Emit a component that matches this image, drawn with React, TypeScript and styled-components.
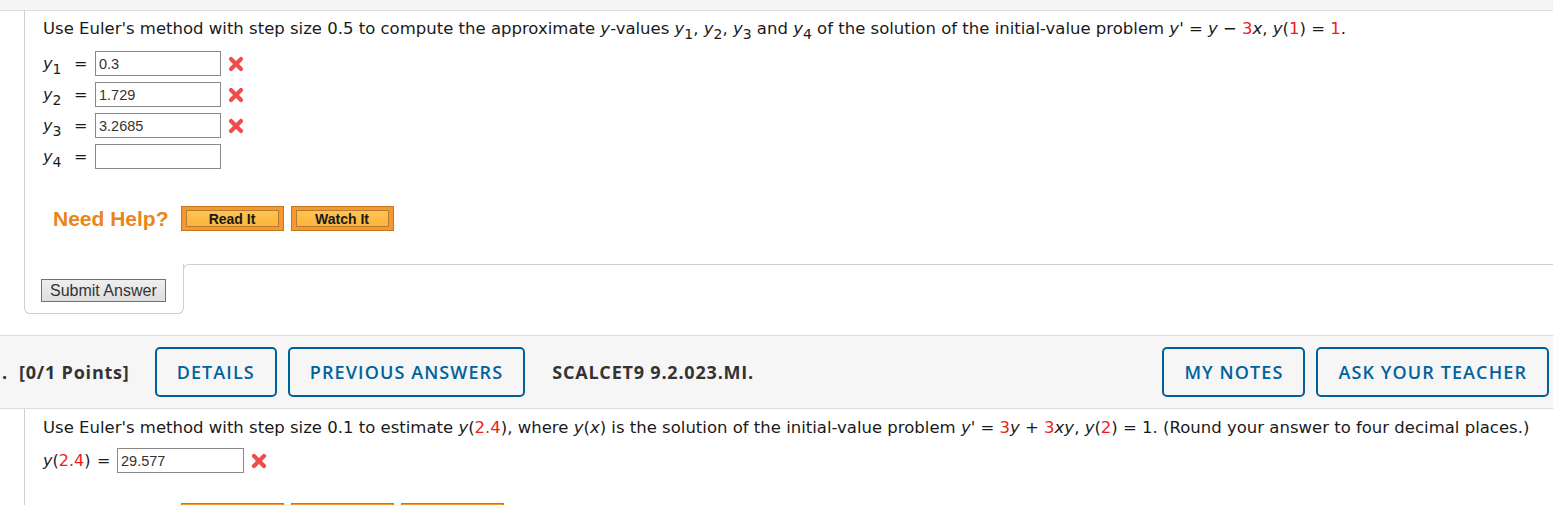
import React from "react";
import styled, { createGlobalStyle } from "styled-components";

const GlobalStyle = createGlobalStyle`
  html, body {
    margin: 0;
    padding: 0;
    background: #ffffff;
  }
  body {
    font-family: "DejaVu Sans", Verdana, sans-serif;
    color: #1a1a1a;
    overflow: hidden;
  }
`;

const TopBand = styled.div`
  height: 10px;
  background: #f5f5f5;
  border-bottom: 1px solid #dcdcdc;
`;

const Question = styled.section`
  margin-left: 24px;
`;

const QuestionBody = styled.div<{ $top: number; $bottom: number }>`
  border-left: 1px solid #cfcfcf;
  padding: ${({ $top }) => $top}px 0 ${({ $bottom }) => $bottom}px 18px;
`;

const Prompt = styled.p`
  margin: 0;
  font-size: 16.5px;
  line-height: 20px;
  color: #1a1a1a;
  white-space: nowrap;
`;

const Var = styled.i`
  font-style: italic;
`;

const Red = styled.span`
  color: #ee1c1c;
`;

const Sub = styled.sub`
  font-size: 14px;
  line-height: 0;
  vertical-align: -5px;
`;

const AnswerList = styled.div<{ $top: number }>`
  display: flex;
  flex-direction: column;
  gap: 6px;
  margin-top: ${({ $top }) => $top}px;
`;

const AnswerRow = styled.div`
  display: flex;
  align-items: center;
  height: 25px;
`;

const Label = styled.span<{ $width: number }>`
  display: inline-flex;
  align-items: center;
  flex: none;
  width: ${({ $width }) => $width}px;
  font-size: 16px;
  white-space: nowrap;
`;

const Name = styled.span<{ $width?: number }>`
  display: inline-block;
  flex: none;
  width: ${({ $width }) => ($width ? `${$width}px` : "auto")};
`;

const Equals = styled.span`
  flex: none;
`;

const AnswerInput = styled.input<{ $width: number }>`
  box-sizing: border-box;
  width: ${({ $width }) => $width}px;
  height: 25px;
  margin: 0;
  padding: 0 3px;
  border: 1px solid #8a8a8a;
  border-radius: 0;
  font-family: "Liberation Sans", Arial, sans-serif;
  font-size: 14.5px;
  color: #333333;
  background: #ffffff;
  outline: none;
`;

const Mark = styled.svg`
  width: 16px;
  height: 16px;
  margin-left: 7px;
  flex: none;
`;

const WrongMark = () => (
  <Mark viewBox="0 0 16 16">
    <path
      d="M3 3 L13 13 M13 3 L3 13"
      stroke="#f04c4c"
      strokeWidth="4.2"
      strokeLinecap="round"
    />
  </Mark>
);

const HelpRow = styled.div<{ $top: number }>`
  display: flex;
  align-items: center;
  margin-top: ${({ $top }) => $top}px;
  padding-left: 10px;
`;

const HelpLabel = styled.span`
  font-family: "Liberation Sans", Arial, sans-serif;
  font-weight: 700;
  font-size: 21px;
  color: #ec841c;
  margin-right: 12px;
`;

const HelpButtons = styled.div`
  display: flex;
  gap: 7px;
`;

const HelpButton = styled.button`
  box-sizing: border-box;
  width: 103px;
  height: 25px;
  padding: 3px 4px;
  border: 1px solid #c8741e;
  background: #f6992c;
  cursor: pointer;
  display: flex;
`;

const HelpButtonFace = styled.span`
  flex: 1;
  display: flex;
  align-items: center;
  justify-content: center;
  border: 1px solid #b77a33;
  background: linear-gradient(#ffc452, #fbb43b);
  font-family: "Liberation Sans", Arial, sans-serif;
  font-weight: 700;
  font-size: 14px;
  color: #1a1a1a;
`;

const Footer = styled.div`
  display: flex;
  align-items: flex-start;
`;

const SubmitTab = styled.div`
  box-sizing: border-box;
  width: 160px;
  height: 50px;
  padding: 15px 0 0 16px;
  border: 1px solid #cfcfcf;
  border-top: none;
  border-radius: 0 0 6px 6px;
`;

const TabFiller = styled.div`
  flex: 1;
  height: 12px;
  margin-left: -1px;
  border-top: 1px solid #cfcfcf;
  border-left: 1px solid #cfcfcf;
  border-top-left-radius: 6px;
`;

const SubmitButton = styled.button`
  box-sizing: border-box;
  height: 23px;
  padding: 0 8px;
  border: 1px solid #707070;
  border-radius: 0;
  background: linear-gradient(#efefef, #dedede);
  font-family: "Liberation Sans", Arial, sans-serif;
  font-size: 16px;
  color: #333333;
  line-height: 21px;
`;

const PointsBar = styled.div`
  display: flex;
  align-items: center;
  margin-top: 21px;
  padding: 11px 4px 11px 2px;
  background: #f6f6f6;
  border-top: 1px solid #dddddd;
  border-bottom: 1px solid #dddddd;
  font-family: "Open Sans", sans-serif;
`;

const BarText = styled.span<{ $left: number; $right: number }>`
  margin-left: ${({ $left }) => $left}px;
  margin-right: ${({ $right }) => $right}px;
  font-size: 18px;
  font-weight: 700;
  letter-spacing: 0.8px;
  color: #333333;
  white-space: pre;
`;

const BarGroup = styled.div`
  display: flex;
  gap: 11px;
`;

const BarButton = styled.button`
  box-sizing: border-box;
  height: 50px;
  padding: 0 20px;
  border: 2px solid #00629c;
  border-radius: 5px;
  background: transparent;
  color: #00629c;
  font-family: "Open Sans", sans-serif;
  font-weight: 600;
  font-size: 18px;
  letter-spacing: 1.1px;
  text-transform: uppercase;
  white-space: nowrap;
  cursor: pointer;
`;

const Spacer = styled.div`
  flex: 1;
`;

const App = () => {
  const firstAnswers = [
    { n: 1, value: "0.3", wrong: true },
    { n: 2, value: "1.729", wrong: true },
    { n: 3, value: "3.2685", wrong: true },
    { n: 4, value: "", wrong: false },
  ];

  return (
    <>
      <GlobalStyle />
      <TopBand />

      <Question>
        <QuestionBody $top={8} $bottom={33}>
          <Prompt>
            Use Euler's method with step size 0.5 to compute the approximate <Var>y</Var>-values{" "}
            <Var>y</Var>
            <Sub>1</Sub>, <Var>y</Var>
            <Sub>2</Sub>, <Var>y</Var>
            <Sub>3</Sub> and <Var>y</Var>
            <Sub>4</Sub> of the solution of the initial-value problem <Var>y</Var>' = <Var>y</Var> −{" "}
            <Red>3</Red>
            <Var>x</Var>, <Var>y</Var>(<Red>1</Red>) = <Red>1</Red>.
          </Prompt>

          <AnswerList $top={12}>
            {firstAnswers.map((a) => (
              <AnswerRow key={a.n}>
                <Label $width={52}>
                  <Name $width={31}>
                    <Var>y</Var>
                    <Sub>{a.n}</Sub>
                  </Name>
                  <Equals>=</Equals>
                </Label>
                <AnswerInput $width={126} value={a.value} readOnly />
                {a.wrong && <WrongMark />}
              </AnswerRow>
            ))}
          </AnswerList>

          <HelpRow $top={37}>
            <HelpLabel>Need Help?</HelpLabel>
            <HelpButtons>
              <HelpButton>
                <HelpButtonFace>Read It</HelpButtonFace>
              </HelpButton>
              <HelpButton>
                <HelpButtonFace>Watch It</HelpButtonFace>
              </HelpButton>
            </HelpButtons>
          </HelpRow>
        </QuestionBody>

        <Footer>
          <SubmitTab>
            <SubmitButton>Submit Answer</SubmitButton>
          </SubmitTab>
          <TabFiller />
        </Footer>
      </Question>

      <PointsBar>
        <BarText $left={0} $right={25}>.  [0/1 Points]</BarText>
        <BarGroup>
          <BarButton>Details</BarButton>
          <BarButton>Previous Answers</BarButton>
        </BarGroup>
        <BarText $left={27} $right={0}>SCALCET9 9.2.023.MI.</BarText>
        <Spacer />
        <BarGroup>
          <BarButton>My Notes</BarButton>
          <BarButton>Ask Your Teacher</BarButton>
        </BarGroup>
      </PointsBar>

      <Question>
        <QuestionBody $top={9} $bottom={30}>
          <Prompt>
            Use Euler's method with step size 0.1 to estimate <Var>y</Var>(<Red>2.4</Red>), where{" "}
            <Var>y</Var>(<Var>x</Var>) is the solution of the initial-value problem <Var>y</Var>' ={" "}
            <Red>3</Red>
            <Var>y</Var> + <Red>3</Red>
            <Var>xy</Var>, <Var>y</Var>(<Red>2</Red>) = 1. (Round your answer to four decimal places.)
          </Prompt>

          <AnswerList $top={10}>
            <AnswerRow>
              <Label $width={74}>
                <Name $width={54}>
                  <Var>y</Var>(<Red>2.4</Red>)
                </Name>
                <Equals>=</Equals>
              </Label>
              <AnswerInput $width={127} value="29.577" readOnly />
              <WrongMark />
            </AnswerRow>
          </AnswerList>

          <HelpRow $top={30}>
            <HelpLabel>Need Help?</HelpLabel>
            <HelpButtons>
              <HelpButton>
                <HelpButtonFace>Read It</HelpButtonFace>
              </HelpButton>
              <HelpButton>
                <HelpButtonFace>Watch It</HelpButtonFace>
              </HelpButton>
              <HelpButton>
                <HelpButtonFace>Master It</HelpButtonFace>
              </HelpButton>
            </HelpButtons>
          </HelpRow>
        </QuestionBody>
      </Question>
    </>
  );
};

export default App;
